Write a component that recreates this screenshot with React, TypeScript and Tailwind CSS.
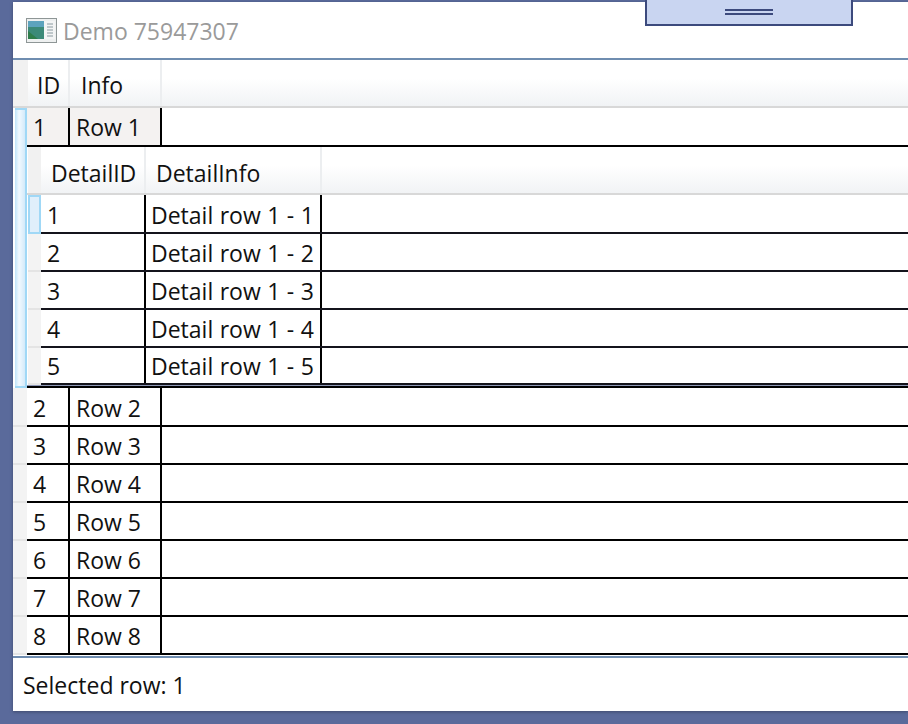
const masterRest = [2, 3, 4, 5, 6, 7, 8];
const details = [1, 2, 3, 4, 5];

function HeaderCell({ label, className }: { label: string; className: string }) {
  return (
    <div className={`flex h-full shrink-0 items-center border-r-2 border-[#eceef0] bg-gradient-to-b from-white from-40% to-[#f1f3f5] ${className}`}>
      {label}
    </div>
  );
}

function MasterRow({ n }: { n: number }) {
  return (
    <div className={`flex shrink-0 ${n === 2 ? "h-[39px]" : "h-[38px]"}`}>
      <div className="w-[14px] shrink-0 border-b-2 border-[#e4e4e4] bg-[#f3f3f3]" />
      <div className="flex min-w-0 flex-1 border-b-2 border-black">
        <div className="flex w-[43px] shrink-0 items-center border-r-2 border-black pl-[6px] pt-[3px]">{n}</div>
        <div className="flex w-[92px] shrink-0 items-center border-r-2 border-black pl-[6px] pt-[3px]">Row {n}</div>
      </div>
    </div>
  );
}

function DetailRow({ n }: { n: number }) {
  const pad = n === 1 ? "pt-[4px]" : "pt-[2px]";
  return (
    <div className={`flex shrink-0 ${n === 1 ? "h-[39px]" : n === 5 ? "h-[37px]" : "h-[38px]"}`}>
      <div className="w-[14px] shrink-0 pl-[1px]">
        {n === 1 ? (
          <div className="h-full w-full border-2 border-[#a0d8f6] bg-[#e0effb]" />
        ) : (
          <div className="h-full w-full border-b-2 border-[#e4e4e4] bg-[#f3f3f3]" />
        )}
      </div>
      <div className="flex min-w-0 flex-1 border-b-2 border-[#14141c]">
        <div className={`flex w-[105px] shrink-0 items-center border-r-2 border-black pl-[6px] ${pad}`}>{n}</div>
        <div className={`flex w-[176px] shrink-0 items-center border-r-2 border-black pl-[5px] [word-spacing:0.5px] ${pad}`}>Detail row 1 - {n}</div>
      </div>
    </div>
  );
}

export default function App() {
  return (
    <div className="relative h-[724px] w-[908px] overflow-hidden bg-[#5a6a9b] pl-[13px] pt-[2px] font-['Open_Sans','Noto_Sans',sans-serif] text-[23px] leading-none text-[#111]">
      <div className="absolute left-[645px] top-0 flex h-[26px] w-[208px] flex-col items-center justify-center gap-[2px] border-2 border-t-0 border-[#3c4a7d] bg-[#c9d5f1]">
        <div className="h-[2px] w-[48px] bg-[#3c4a7d]" />
        <div className="h-[2px] w-[48px] bg-[#3c4a7d]" />
      </div>

      <div className="flex h-[709px] flex-col bg-white shadow-[0_1px_3px_#3f4a6d]">
        <div className="flex h-[56px] shrink-0 items-center gap-[6px] pl-[13px]">
          <svg width="31" height="25" viewBox="0 0 31 25" className="shrink-0">
            <rect x="0.5" y="0.5" width="30" height="24" fill="#eef0f0" stroke="#8e9696" />
            <rect x="2" y="3" width="16" height="18" fill="#3c8a78" />
            <rect x="2" y="3" width="16" height="6" fill="#5da3bd" />
            <path d="M2 21 L12 21 L2 13 Z" fill="#2f7d4a" />
            <rect x="18" y="3" width="11" height="18" fill="#f4f5f5" />
            <path d="M21 6h6M21 9h6M21 12h6M21 15h6M21 18h6" stroke="#8a9aa0" strokeWidth="1" />
          </svg>
          <span className="pt-[2px] text-[#9a9a9a]">Demo 75947307</span>
        </div>

        <div className="h-[2px] shrink-0 bg-[#6f8db0]" />

        <div className="flex h-[48px] shrink-0 border-b-2 border-[#d8d8d8]">
          <div className="w-[15px] shrink-0 bg-[#f1f1f1]" />
          <HeaderCell label="ID" className="w-[42px] pl-[9px] pt-[5px]" />
          <HeaderCell label="Info" className="w-[92px] pl-[11px] pt-[5px]" />
          <div className="flex-1 bg-gradient-to-b from-white from-40% to-[#f1f3f5]" />
        </div>

        <div className="flex min-h-0 flex-1 flex-col overflow-hidden">
          <div className="flex h-[280px] shrink-0">
            <div className="ml-[2px] w-[12px] shrink-0 border-y-2 border-r-2 border-[#a0d8f6] bg-gradient-to-r from-[#bfe4f9] via-[#f2f9fe] via-40% to-[#d3eafa]" />
            <div className="flex min-w-0 flex-1 flex-col">
              <div className="flex h-[39px] shrink-0 border-b-2 border-black">
                <div className="flex w-[43px] shrink-0 items-center border-r-2 border-black bg-[#f4f2f1] pl-[6px] pt-[2px]">1</div>
                <div className="flex w-[92px] shrink-0 items-center border-r-2 border-black bg-[#f4f2f1] pl-[6px] pt-[2px]">Row 1</div>
              </div>
              <div className="flex h-[48px] shrink-0 border-b-2 border-[#d8d8d8]">
                <div className="ml-[1px] w-[13px] shrink-0 bg-[#f1f1f1]" />
                <HeaderCell label="DetailID" className="w-[105px] pl-[10px] pt-[7px]" />
                <HeaderCell label="DetailInfo" className="w-[176px] pl-[10px] pt-[7px]" />
                <div className="flex-1 bg-gradient-to-b from-white from-40% to-[#f1f3f5]" />
              </div>
              {details.map((n) => (
                <DetailRow key={n} n={n} />
              ))}
              <div className="min-h-0 flex-1 border-b-2 border-black bg-[#8d97b5]" />
            </div>
          </div>
          {masterRest.map((n) => (
            <MasterRow key={n} n={n} />
          ))}
        </div>

        <div className="h-[2px] shrink-0 bg-[#6f8db0]" />

        <div className="flex h-[53px] shrink-0 items-center pl-[10px] pt-[2px]">Selected row: 1</div>
      </div>
    </div>
  );
}
